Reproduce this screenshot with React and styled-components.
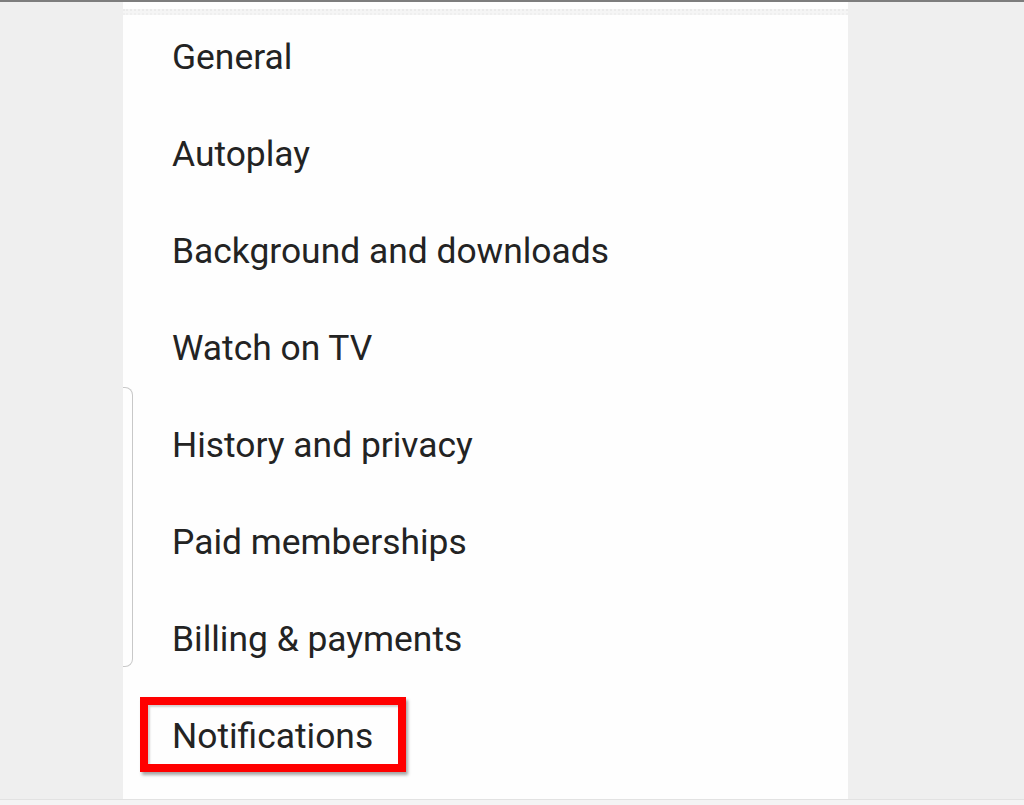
import React from "react";
import styled, { createGlobalStyle } from "styled-components";

const Global = createGlobalStyle`
  html, body { margin: 0; padding: 0; }
  body { background: #efefef; font-family: Roboto, "Noto Sans", sans-serif; }
`;

const Page = styled.div`
  width: 1024px;
  height: 805px;
  display: flex;
  flex-direction: column;
  background: #efefef;
  overflow: hidden;
`;

const TopBar = styled.div`
  height: 2px;
  background: #7d7d7d;
  flex: none;
`;

const Body = styled.div`
  flex: 1;
  display: flex;
  padding-left: 123px;
`;

const Panel = styled.div`
  position: relative;
  width: 725px;
  background: #fefefe;
  display: flex;
  flex-direction: column;
  padding-top: 7px;
`;

const Divider = styled.div`
  height: 6px;
  border-top: 2px dotted #ebebeb;
  border-bottom: 2px dotted #efefef;
  box-sizing: border-box;
  background: #f5f5f5;
`;

const List = styled.ul`
  list-style: none;
  margin: 0;
  padding: 0;
  display: flex;
  flex-direction: column;
`;

const Item = styled.li`
  height: 97px;
  display: flex;
  align-items: center;
  padding-left: 49px;
  margin-top: ${(p) => (p.$first ? "-6px" : "0")};
`;

const Label = styled.span`
  display: inline-block;
  font-size: 35.4px;
  line-height: 1;
  color: #232323;
  position: relative;
`;

const Highlight = styled.span`
  position: absolute;
  left: -32px;
  right: -33px;
  top: -22px;
  bottom: -18px;
  border: 8px solid #ff0000;
  box-sizing: border-box;
  box-shadow: 2px 3px 3px rgba(0, 0, 0, 0.35), inset 2px 2px 2px rgba(0, 0, 0, 0.18);
`;

const Bracket = styled.div`
  position: absolute;
  left: 0;
  top: 385px;
  width: 9px;
  height: 278px;
  border: 1px solid #c8c8c8;
  border-left: none;
  border-radius: 0 8px 8px 0;
`;

const BottomBar = styled.div`
  height: 5px;
  flex: none;
  border-top: 1px solid #e2e2e2;
  background: #f4f4f4;
`;

const items = [
  "General",
  "Autoplay",
  "Background and downloads",
  "Watch on TV",
  "History and privacy",
  "Paid memberships",
  "Billing & payments",
  "Notifications",
];

export default function App() {
  return (
    <Page>
      <Global />
      <TopBar />
      <Body>
        <Panel>
          <Divider />
          <Bracket />
          <List>
            {items.map((t, i) => (
              <Item key={t} $first={i === 0}>
                <Label>
                  {t === "Notifications" && <Highlight />}
                  {t}
                </Label>
              </Item>
            ))}
          </List>
        </Panel>
      </Body>
      <BottomBar />
    </Page>
  );
}
